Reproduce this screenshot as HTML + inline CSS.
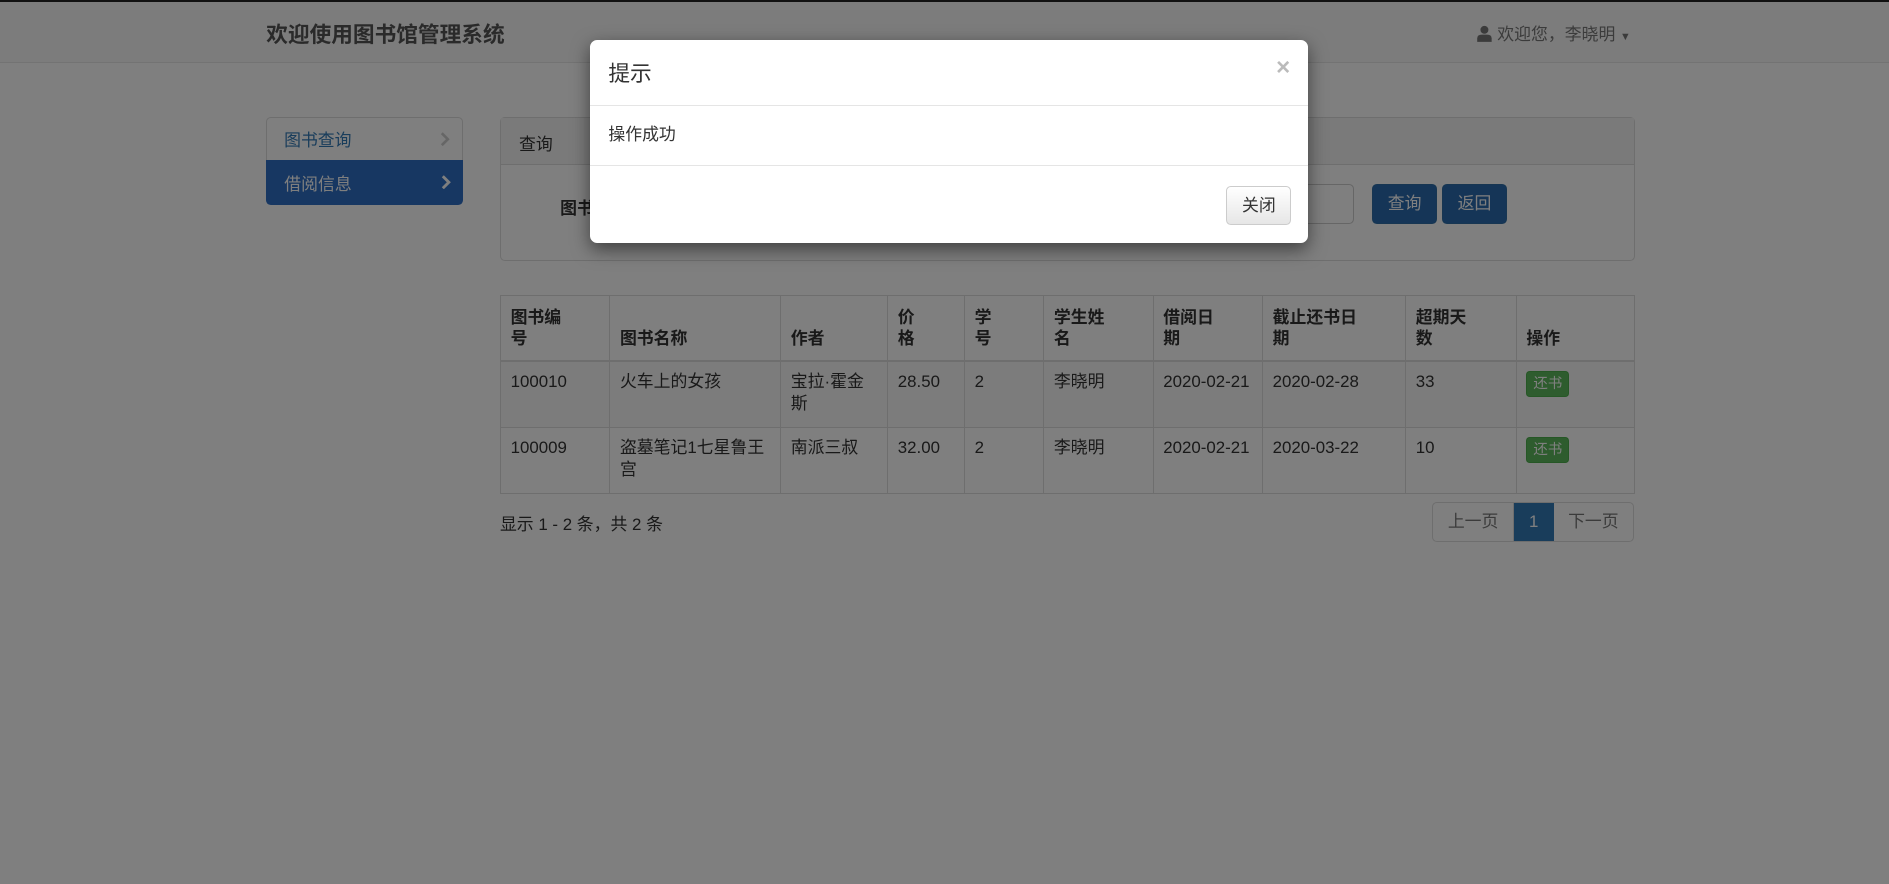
<!DOCTYPE html>
<html><head><meta charset="utf-8">
<style>
html,body{margin:0;padding:0;width:1889px;height:884px;overflow:hidden;background:#fff}
#w{zoom:1.2047;position:relative;width:1568px;height:734px;font-family:"Liberation Sans","Noto Sans CJK SC",sans-serif;font-size:14px;color:#333}
.a{position:absolute}
.nav{left:0;top:0;width:1568px;height:52px;background:#f8f8f8;border-bottom:1px solid #e7e7e7;border-top:2px solid #222;box-sizing:border-box}
.lg{border:1px solid #ddd;background:#fff;box-sizing:border-box}
table{border-collapse:collapse;position:absolute;left:415px;top:245px;width:942px}
td,th{border:1px solid #ddd;padding:8px;vertical-align:top;text-align:left;line-height:18px;font-size:14px}
th{vertical-align:bottom;border-bottom:2px solid #ddd}
tr.r td{height:38px}
.gb{display:inline-block;background:#5cb85c;border:1px solid #4cae4c;color:#fff;font-size:12px;padding:1px 5px;border-radius:3px;line-height:18px}
.btn{position:absolute;box-sizing:border-box;border-radius:4px;text-align:center;line-height:31px;font-size:14px}
#ov{position:absolute;left:0;top:0;width:1568px;height:734px;background:rgba(0,0,0,.5)}
.md{left:490px;top:33px;width:596px;height:169px;background:#fff;border-radius:6px;box-shadow:0 5px 15px rgba(0,0,0,.5)}
</style></head><body><div id="w">
<div class="a nav"></div>
<div class="a" style="left:221px;top:15px;font-size:18px;font-weight:bold;color:#555">欢迎使用图书馆管理系统</div>
<div class="a" style="left:1225px;top:17px;color:#777">
<svg width="14" height="14" viewBox="0 0 14 14" style="vertical-align:-1px"><circle cx="7" cy="4" r="3.3" fill="#777"/><path d="M1 14 L1 11 Q1 8 5 8 L9 8 Q13 8 13 11 L13 14 Z" fill="#777"/></svg> 欢迎您，李晓明 <span style="font-size:9px">▼</span></div>

<div class="a lg" style="left:221px;top:97px;width:163px;height:37px;border-radius:4px 4px 0 0;color:#337ab7;padding:7px 14px">图书查询<svg class="a" style="right:10px;top:12px" width="8" height="12" viewBox="0 0 8 12"><path d="M1.5 1 L6.5 6 L1.5 11" fill="none" stroke="#ccc" stroke-width="2.2"/></svg></div>
<div class="a" style="left:221px;top:133px;width:163px;height:37px;border-radius:0 0 4px 4px;background:#2e6fc4;color:#fff;padding:8px 15px;box-sizing:border-box">借阅信息<svg class="a" style="right:10px;top:12px" width="8" height="12" viewBox="0 0 8 12"><path d="M1.5 1 L6.5 6 L1.5 11" fill="none" stroke="#fff" stroke-width="2.4"/></svg></div>

<div class="a" style="left:415px;top:97px;width:942px;height:120px;border:1px solid #ddd;border-radius:4px;box-sizing:border-box">
<div style="background:#f5f5f5;border-bottom:1px solid #ddd;height:39px;box-sizing:border-box;padding:10px 15px;color:#333">查询</div></div>
<div class="a" style="left:465px;top:161px;font-weight:bold">图书</div>
<div class="a" style="left:1080px;top:153px;width:44px;height:33px;border:1px solid #ccc;border-radius:4px;box-sizing:border-box;background:#fff"></div>
<div class="btn" style="left:1139px;top:153px;width:54px;height:33px;background:#2a6aae;border:1px solid #2e6da4;color:#fff">查询</div>
<div class="btn" style="left:1197px;top:153px;width:54px;height:33px;background:#2a6aae;border:1px solid #2e6da4;color:#fff">返回</div>

<table>
<tr style="height:54px"><th style="width:74px">图书编<br>号</th><th style="width:125px">图书名称</th><th style="width:72px">作者</th><th style="width:47px">价<br>格</th><th style="width:49px">学<br>号</th><th style="width:74px">学生姓<br>名</th><th style="width:74px">借阅日<br>期</th><th style="width:102px">截止还书日<br>期</th><th style="width:75px">超期天<br>数</th><th>操作</th></tr>
<tr class="r" style="background:#f9f9f9"><td>100010</td><td>火车上的女孩</td><td>宝拉·霍金<br>斯</td><td>28.50</td><td>2</td><td>李晓明</td><td>2020-02-21</td><td>2020-02-28</td><td>33</td><td><span class="gb">还书</span></td></tr>
<tr class="r"><td>100009</td><td>盗墓笔记1七星鲁王<br>宫</td><td>南派三叔</td><td>32.00</td><td>2</td><td>李晓明</td><td>2020-02-21</td><td>2020-03-22</td><td>10</td><td><span class="gb">还书</span></td></tr>
</table>
<div class="a" style="left:415px;top:423px">显示 1 - 2 条，共 2 条</div>
<div class="a" style="left:1189px;top:417px;height:33px;display:flex;border:1px solid #ddd;border-radius:4px;box-sizing:border-box;line-height:31px;color:#777;background:#fff">
<div style="width:66px;text-align:center;border-right:1px solid #ddd">上一页</div>
<div style="width:33px;text-align:center;background:#337ab7;color:#fff">1</div>
<div style="width:66px;text-align:center">下一页</div></div>

<div id="ov"></div>
<div class="a md">
<div style="height:55px;border-bottom:1px solid #e5e5e5;box-sizing:border-box;padding:14px 15px;font-size:18px;color:#333">提示<span class="a" style="right:15px;top:12px;font-size:20px;color:#bbb;font-weight:bold">×</span></div>
<div style="height:50px;border-bottom:1px solid #e5e5e5;box-sizing:border-box;padding:15px;line-height:18px">操作成功</div>
<div class="btn" style="left:528px;top:121px;width:54px;height:33px;border:1px solid #ccc;background:linear-gradient(#fff,#e6e6e6);color:#333">关闭</div>
</div>
</div></body></html>
